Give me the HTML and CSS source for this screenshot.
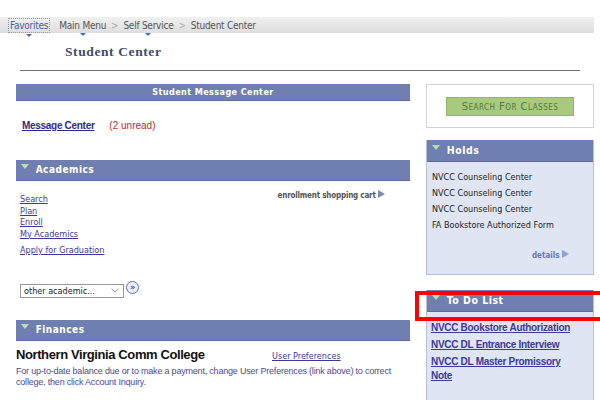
FILE: index.html
```html
<!DOCTYPE html>
<html lang="en">
<head>
    <meta charset="UTF-8">
    <title>Student Center</title>
    <link rel="stylesheet" href="styles.css">
</head>
<body>
    <nav class="navbar">
        <span class="fav">Favorites<i class="drop"></i></span>
        <span class="crumb">Main Menu<i class="drop"></i></span>
        <span class="sep">&gt;</span>
        <span class="crumb">Self Service<i class="drop"></i></span>
        <span class="sep">&gt;</span>
        <span class="crumb">Student Center</span>
    </nav>

    <div class="page-title">
        <h1>Student Center</h1>
    </div>

    <div class="content">
        <div class="main-col">
            <div class="bar bar-center">Student Message Center</div>
            <div class="msg-row">
                <a href="#" class="msg-link">Message Center</a>
                <span class="unread">(2 unread)</span>
            </div>

            <div class="bar section-bar">
                <svg class="tri" width="8" height="6" viewBox="0 0 8 6"><path d="M0 0 L8 0 L4 5 Z" fill="#b6e0a8"/></svg>
                Academics
            </div>
            <div class="academics">
                <div class="acad-links">
                    <a href="#">Search</a>
                    <a href="#">Plan</a>
                    <a href="#">Enroll</a>
                    <a href="#">My Academics</a>
                    <a href="#" class="grad">Apply for Graduation</a>
                </div>
                <div class="cart">enrollment shopping cart
                    <svg width="7" height="8" viewBox="0 0 7 8"><path d="M0 0 L7 4 L0 8 Z" fill="#7f8aa8"/></svg>
                </div>
            </div>
            <div class="other-row">
                <div class="select">
                    <span>other academic...</span>
                    <svg width="8" height="5" viewBox="0 0 8 5"><path d="M0.5 0.5 L4 4 L7.5 0.5" fill="none" stroke="#9aa3b8" stroke-width="1"/></svg>
                </div>
                <span class="go">&raquo;</span>
            </div>

            <div class="bar section-bar">
                <svg class="tri" width="8" height="6" viewBox="0 0 8 6"><path d="M0 0 L8 0 L4 5 Z" fill="#b6e0a8"/></svg>
                Finances
            </div>
            <div class="fin-head">
                <span class="college">Northern Virginia Comm College</span>
                <a href="#" class="prefs">User Preferences</a>
            </div>
            <p class="fin-note">For up-to-date balance due or to make a payment, change User Preferences (link above) to correct college, then click Account Inquiry.</p>
        </div>

        <div class="side-col">
            <div class="search-box">
                <button class="search-btn">Search For Classes</button>
            </div>

            <div class="side-box">
                <div class="bar side-bar">
                    <svg class="tri" width="8" height="6" viewBox="0 0 8 6"><path d="M0 0 L8 0 L4 5 Z" fill="#b6e0a8"/></svg>
                    Holds
                </div>
                <ul class="holds">
                    <li>NVCC Counseling Center</li>
                    <li>NVCC Counseling Center</li>
                    <li>NVCC Counseling Center</li>
                    <li>FA Bookstore Authorized Form</li>
                </ul>
                <div class="details">details
                    <svg width="7" height="8" viewBox="0 0 7 8"><path d="M0 0 L7 4 L0 8 Z" fill="#8fa0d8"/></svg>
                </div>
            </div>

            <div class="side-box todo">
                <div class="bar side-bar">
                    <svg class="tri" width="8" height="6" viewBox="0 0 8 6"><path d="M0 0 L8 0 L4 5 Z" fill="#b6e0a8"/></svg>
                    To Do List
                </div>
                <div class="highlight"></div>
                <div class="todo-links">
                    <a href="#">NVCC Bookstore Authorization</a>
                    <a href="#">NVCC DL Entrance Interview</a>
                    <a href="#">NVCC DL Master Promissory Note</a>
                </div>
            </div>
        </div>
    </div>
</body>
</html>
```

FILE: styles.css
```css
body {
    margin: 0;
    background: #fff;
    font-family: "DejaVu Sans Condensed", "Liberation Sans", sans-serif;
    color: #222;
    overflow: hidden;
}
a {
    color: #3a3a9a;
}
.navbar {
    margin-top: 17px;
    width: 594px;
    height: 16px;
    padding-left: 8px;
    box-sizing: border-box;
    background: linear-gradient(#f0f0f0, #dedede);
    display: flex;
    align-items: center;
    font-size: 10px;
    letter-spacing: -0.25px;
    color: #555;
}
.fav {
    position: relative;
    color: #4a5fa8;
    border: 1px dotted #8a96b8;
    padding: 0 1px;
    margin-right: 9px;
    height: 13px;
    line-height: 13px;
}
.crumb {
    position: relative;
}
.sep {
    color: #aaa;
    margin: 0 5px;
}
.drop {
    position: absolute;
    left: 50%;
    bottom: -5px;
    margin-left: -3px;
    border-left: 3px solid transparent;
    border-right: 3px solid transparent;
    border-top: 3px solid #4a6cc0;
}
.page-title {
    margin: 0 20px 0 20px;
    height: 37px;
    border-bottom: 1px solid #6e7484;
    display: flex;
    align-items: center;
}
.page-title h1 {
    margin: 0 0 0 45px;
    font-family: "Liberation Serif", serif;
    font-size: 13.5px;
    letter-spacing: 0.6px;
    color: #3e4c6c;
}
.content {
    display: flex;
    gap: 16px;
    padding: 13px 0 0 16px;
}
.main-col {
    width: 394px;
}
.side-col {
    width: 168px;
}
.bar {
    background: #6f7fb0;
    color: #fff;
    font-weight: bold;
    border-bottom: 1px solid #5a6a9a;
}
.bar-center {
    height: 16px;
    line-height: 16px;
    text-align: center;
    font-size: 9px;
    letter-spacing: 0.4px;
}
.msg-row {
    padding: 19px 0 0 6px;
    height: 18px;
    font-size: 10px;
}
.msg-link {
    font-weight: bold;
    color: #2b2b8e;
    font-family: "Liberation Sans", sans-serif;
    letter-spacing: -0.3px;
}
.unread {
    color: #c02828;
    margin-left: 12px;
    font-family: "Liberation Sans", sans-serif;
}
.section-bar {
    margin-top: 22px;
    height: 20px;
    line-height: 20px;
    font-size: 10px;
    letter-spacing: 0.5px;
    padding-left: 5px;
}
.tri {
    margin-right: 3px;
    vertical-align: 3px;
}
.academics {
    display: flex;
    justify-content: space-between;
    padding: 9px 25px 0 4px;
}
.acad-links {
    display: flex;
    flex-direction: column;
    font-size: 9px;
    line-height: 11.5px;
    padding-top: 4px;
}
.acad-links a {
    color: #3a3a9a;
}
.acad-links .grad {
    margin-top: 5px;
}
.cart {
    font-size: 8px;
    font-weight: bold;
    color: #555;
    letter-spacing: -0.2px;
}
.other-row {
    display: flex;
    align-items: center;
    margin: 27px 0 0 4px;
}
.select {
    width: 104px;
    height: 14px;
    border: 1px solid #999;
    display: flex;
    align-items: center;
    justify-content: space-between;
    padding: 0 4px 0 3px;
    box-sizing: border-box;
    font-size: 9px;
    color: #222;
}
.go {
    width: 11px;
    height: 11px;
    border: 1px solid #5a74c0;
    border-radius: 50%;
    background: #e8eefa;
    color: #3a58b8;
    font-size: 9px;
    font-weight: bold;
    line-height: 10px;
    text-align: center;
    margin: -6px 0 0 2px;
}
.fin-head {
    display: flex;
    align-items: baseline;
    margin-top: 6px;
}
.college {
    font-family: "Liberation Sans", sans-serif;
    font-weight: bold;
    font-size: 13px;
    letter-spacing: -0.4px;
    color: #111;
    width: 256px;
}
.prefs {
    font-size: 9px;
    color: #3a3a9a;
}
.fin-note {
    margin: 4px 0 0 0;
    font-family: "Liberation Sans", sans-serif;
    font-size: 9px;
    line-height: 11px;
    color: #4a4aa0;
    letter-spacing: -0.2px;
}
.search-box {
    height: 42px;
    border: 1px solid #cfd2d8;
    display: flex;
    align-items: center;
    justify-content: center;
}
.search-btn {
    width: 128px;
    height: 19px;
    background: #a9c97f;
    border: 1px solid #94b46a;
    color: #4d7a3a;
    font-family: "DejaVu Sans Condensed", sans-serif;
    font-size: 11px;
    font-variant: small-caps;
    letter-spacing: 0.5px;
    padding: 0;
}
.side-box {
    margin-top: 12px;
    background: #dfe5f2;
    border: 1px solid #b8bfd0;
    border-top: none;
}
.side-bar {
    height: 21px;
    line-height: 21px;
    font-size: 10.5px;
    letter-spacing: 0.5px;
    padding-left: 5px;
}
.holds {
    list-style: none;
    margin: 0;
    padding: 7px 0 0 5px;
    font-size: 9px;
    line-height: 16px;
    color: #222;
}
.details {
    text-align: right;
    padding: 17px 24px 14px 0;
    font-size: 8px;
    font-weight: bold;
    color: #6878b0;
}
.todo {
    position: relative;
    margin-top: 15px;
    height: 140px;
}
.highlight {
    position: absolute;
    left: -12px;
    top: 1px;
    width: 190px;
    height: 22px;
    border: 4px solid #f00;
}
.todo-links {
    display: flex;
    flex-direction: column;
    padding: 9px 14px 0 4px;
    font-family: "Liberation Sans", sans-serif;
    font-size: 10px;
    font-weight: bold;
    letter-spacing: -0.3px;
    line-height: 14px;
    gap: 3px;
}
.todo-links a {
    color: #3a3a9a;
}
```
